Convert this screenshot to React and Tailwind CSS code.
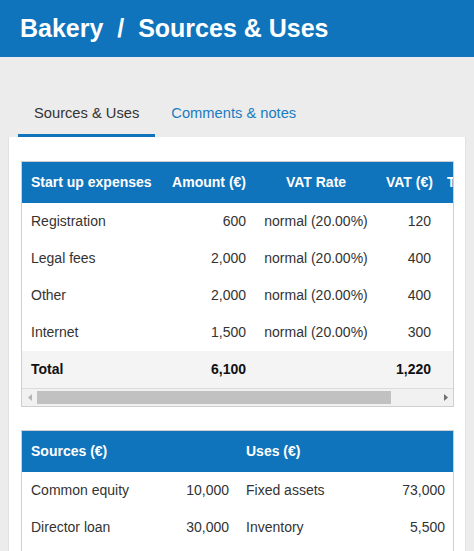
import React from "react";

const rows = [
  ["Registration", "600", "normal (20.00%)", "120", "720"],
  ["Legal fees", "2,000", "normal (20.00%)", "400", "2,400"],
  ["Other", "2,000", "normal (20.00%)", "400", "2,400"],
  ["Internet", "1,500", "normal (20.00%)", "300", "1,800"],
];

function ExpensesTable() {
  return (
    <div className="border border-[#cfcfcf] bg-white">
      <div className="overflow-hidden w-full">
        <div className="w-[600px]">
          <div className="grid grid-cols-[142px_90px_124px_61px_183px] h-[41px] items-center bg-[#1074bc] text-white font-bold text-[14px]">
            <div className="pl-[9px] pr-2 whitespace-nowrap">Start up expenses</div>
            <div className="px-2 text-right whitespace-nowrap">Amount (€)</div>
            <div className="px-2 text-center whitespace-nowrap">VAT Rate</div>
            <div className="px-2 text-right whitespace-nowrap">VAT (€)</div>
            <div className="px-2 text-left whitespace-nowrap">Total (€)</div>
          </div>
          {rows.map((r) => (
            <div key={r[0]} className="grid grid-cols-[142px_90px_124px_61px_183px] h-[37px] items-center text-[14px] text-[#333]">
              <div className="pl-[9px] pr-2 whitespace-nowrap">{r[0]}</div>
              <div className="px-2 text-right">{r[1]}</div>
              <div className="px-2 text-center whitespace-nowrap">{r[2]}</div>
              <div className="px-2 text-right">{r[3]}</div>
              <div className="px-2 text-right">{r[4]}</div>
            </div>
          ))}
          <div className="grid grid-cols-[142px_90px_124px_61px_183px] h-[37px] items-center text-[14px] font-bold text-[#111] bg-[#f4f4f4]">
            <div className="pl-[9px] pr-2">Total</div>
            <div className="px-2 text-right">6,100</div>
            <div className="px-2"></div>
            <div className="px-2 text-right">1,220</div>
            <div className="px-2 text-right">7,320</div>
          </div>
        </div>
      </div>
      <div className="h-[18px] border-t border-[#dcdcdc] bg-[#f1f1f1] flex items-center">
        <div className="w-[15px] flex items-center justify-center">
          <svg width="4" height="7" viewBox="0 0 4 7"><path d="M4 0 L0 3.5 L4 7 Z" fill="#b5b5b5" /></svg>
        </div>
        <div className="w-[354px] h-[13px] bg-[#c1c1c1]"></div>
        <div className="flex-1"></div>
        <div className="w-[15px] flex items-center justify-center">
          <svg width="4" height="7" viewBox="0 0 4 7"><path d="M0 0 L4 3.5 L0 7 Z" fill="#6f6f6f" /></svg>
        </div>
      </div>
    </div>
  );
}

function SourcesTable() {
  return (
    <div className="border border-[#cfcfcf] border-b-0 bg-white">
      <div className="grid grid-cols-[130px_85px_130px_86px] h-[41px] items-center bg-[#1074bc] text-white font-bold text-[14px]">
        <div className="col-span-2 pl-[9px]">Sources (€)</div>
        <div className="col-span-2 pl-[9px]">Uses (€)</div>
      </div>
      {[
        ["Common equity", "10,000", "Fixed assets", "73,000"],
        ["Director loan", "30,000", "Inventory", "5,500"],
        ["", "", "", ""],
      ].map((r, i) => (
        <div key={i} className="grid grid-cols-[130px_85px_130px_86px] h-[37px] items-center text-[14px] text-[#333]">
          <div className="pl-[9px]">{r[0]}</div>
          <div className="px-2 text-right">{r[1]}</div>
          <div className="pl-[9px]">{r[2]}</div>
          <div className="px-2 text-right">{r[3]}</div>
        </div>
      ))}
    </div>
  );
}

export default function App() {
  return (
    <div className="w-[474px] h-[551px] overflow-hidden bg-[#ececec]" style={{ fontFamily: '"Liberation Sans", Arial, sans-serif' }}>
      <div className="h-[57px] bg-[#1074bc] flex items-center pl-[20px]">
        <h1 className="text-white font-bold text-[25px] leading-none whitespace-pre">Bakery  /  Sources &amp; Uses</h1>
      </div>
      <div className="px-[8px] pt-[35px]">
        <div className="flex pl-[10px] h-[45px]">
          <div className="px-4 flex items-center border-b-[3px] border-[#1074bc] text-[14.7px] text-[#333]">Sources &amp; Uses</div>
          <div className="px-4 flex items-center border-b-[3px] border-transparent text-[14.7px] text-[#1a7cc1]">Comments &amp; notes</div>
        </div>
        <div className="bg-white border-x border-[#e2e2e2] pl-[12px] pr-[11px] pt-[24px] flex flex-col gap-[23px] h-[420px]">
          <ExpensesTable />
          <SourcesTable />
        </div>
      </div>
    </div>
  );
}
